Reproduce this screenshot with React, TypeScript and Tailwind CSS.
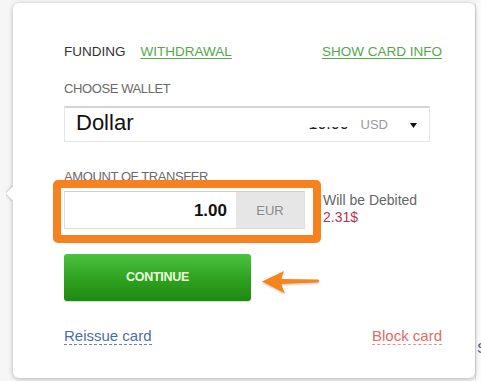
import React from 'react';

const font = { fontFamily: '"Liberation Sans", Arial, Helvetica, sans-serif' };

function Caret() {
  return (
    <svg width="7" height="5" viewBox="0 0 7 5" className="block">
      <path d="M0 0 L7 0 L3.5 5 Z" fill="#111" />
    </svg>
  );
}

function Arrow() {
  return (
    <svg width="62" height="28" viewBox="0 0 62 28" className="block">
      <defs>
        <filter id="ash" x="-20%" y="-30%" width="140%" height="160%">
          <feDropShadow dx="0" dy="1" stdDeviation="0.8" floodColor="#000" floodOpacity="0.25" />
        </filter>
      </defs>
      <path
        d="M1 12.5 L23 2 Q21 7 20.5 10 L57 10.6 Q59.5 11.6 57 13.4 L20.5 15 Q21 19 24 24.5 Z"
        fill="#f5851f"
        filter="url(#ash)"
      />
    </svg>
  );
}

export default function App() {
  return (
    <div
      className="w-[481px] h-[381px] overflow-hidden bg-[#f6f6f6] flex pt-[3px] pl-[13px]"
      style={font}
    >
      {/* popover card */}
      <div className="relative w-[462px] h-[375px] shrink-0 bg-white rounded-[6px] shadow-[0_1px_5px_rgba(0,0,0,0.28)] pl-[51px] pr-[33px] flex flex-col">
        {/* left pointer */}
        <div className="absolute -left-[7px] top-[182px] w-[7px] h-[16px] overflow-hidden">
          <div className="w-[11px] h-[11px] bg-white rotate-45 ml-[2px] mt-[2.5px] shadow-[-1px_1px_2px_rgba(0,0,0,0.18)]" />
        </div>

        {/* tabs */}
        <div className="mt-[41px] flex items-start h-[16px] leading-[16px] text-[13.5px]">
          <span className="text-[#333]">FUNDING</span>
          <a className="ml-[15px] text-[#55a84a] underline underline-offset-[2px] decoration-[1px]">WITHDRAWAL</a>
          <a className="ml-auto text-[#55a84a] underline underline-offset-[2px] decoration-[1px]">SHOW CARD INFO</a>
        </div>

        <div className="mt-[21px] text-[13px] leading-[16px] tracking-[-0.4px] text-[#6a6a6a]">CHOOSE WALLET</div>

        {/* wallet select */}
        <div className="mt-[9px] w-[366px] h-[36px] border border-[#e6e6e6] border-t-2 border-t-[#d4d4d4] flex items-start pl-[11px] pr-[12px]">
          <span className="mt-[4px] text-[22px] leading-[22px] text-[#111]">Dollar</span>
          {/* balance, scrolled almost out of view */}
          <div className="ml-auto mt-[19px] h-[2px] overflow-hidden">
            <div className="-mt-[11.5px] text-[16px] leading-none text-[#222]">10.00</div>
          </div>
          <span className="ml-[12px] mt-[10px] text-[13px] leading-[13px] text-[#9a9a9a]">USD</span>
          <div className="ml-[22px] mt-[15px]">
            <Caret />
          </div>
        </div>

        <div className="mt-[27px] text-[13px] leading-[16px] tracking-[-0.4px] text-[#6a6a6a]">AMOUNT OF TRANSFER</div>

        {/* amount row */}
        <div className="mt-[6px] flex items-start">
          <div className="relative w-[241px] h-[38px] shrink-0 flex border border-[#dedede] border-t-[#cfcfcf]">
            <div className="flex-1 bg-white flex items-center justify-end pr-[9px] text-[17px] leading-[17px] font-bold text-[#111]">1.00</div>
            <div className="w-[68px] bg-[#e6e6e6] flex items-center justify-center text-[13px] leading-[13px] text-[#8a8a8a]">EUR</div>
            {/* annotation frame */}
            <div className="absolute -left-[12px] -top-[12px] w-[268px] h-[63px] border-[8px] border-[#f7811f] rounded-[5px] pointer-events-none" />
          </div>
          <div className="ml-[18px] mt-[1px] text-[14px] leading-[17px]">
            <div className="text-[#666]">Will be Debited</div>
            <div className="text-[#b3364f]">2.31$</div>
          </div>
        </div>

        {/* continue */}
        <div className="mt-[25px] flex items-center">
          <button className="w-[187px] h-[47px] rounded-[3px] bg-gradient-to-b from-[#4cc240] via-[#30a322] to-[#1d8a10] text-[#eaffdf] text-[12.5px] font-bold tracking-[-0.3px] shadow-[0_1px_1px_rgba(0,0,0,0.15)]">
            CONTINUE
          </button>
          <div className="ml-[10px] mt-[10px]">
            <Arrow />
          </div>
        </div>

        {/* bottom links */}
        <div className="mt-[27px] flex items-start text-[15px] leading-[16px]">
          <a className="text-[#4b6ea5] border-b border-dashed border-[#6d87b3]">Reissue card</a>
          <a className="ml-auto text-[#e26a6a] border-b border-dashed border-[#e89090]">Block card</a>
        </div>
      </div>

      {/* page behind the card */}
      <div className="w-[6px] h-full shrink-0 overflow-hidden border-l border-[#e2e2e2] bg-[#fbfbfb]">
        <div className="mt-[337px] ml-[1px] text-[15px] leading-[16px] text-[#3c5f96]">S</div>
      </div>
    </div>
  );
}
